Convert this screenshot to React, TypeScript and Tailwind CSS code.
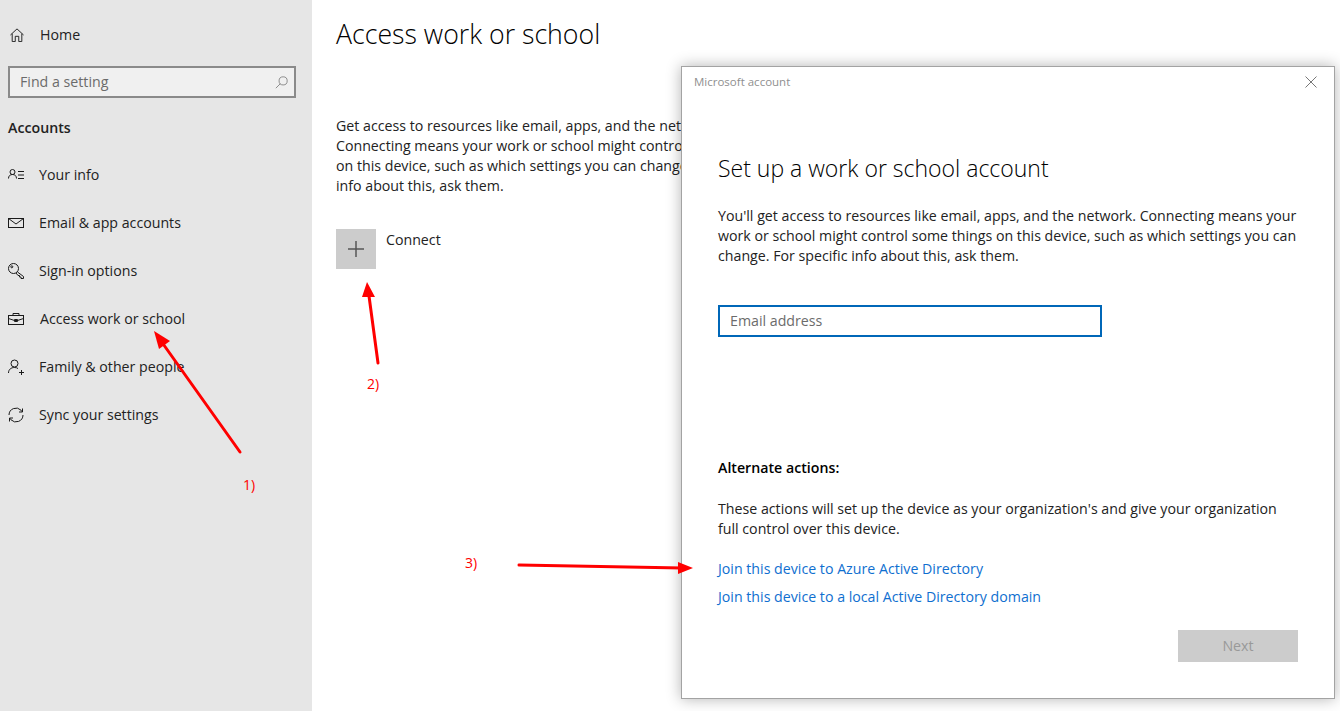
const font = "font-['Open_Sans','Noto_Sans',sans-serif]";

function Icon({ children }: { children: React.ReactNode }) {
  return (
    <svg className="w-4 h-4 shrink-0 text-[#1a1a1a]" viewBox="0 0 16 16" fill="none" stroke="currentColor" strokeWidth={1}>
      {children}
    </svg>
  );
}

const navItems = [
  {
    label: "Your info",
    textClass: "",
    icon: (
      <Icon>
        <circle cx="4.500" cy="5" r="2.500" />
        <path d="M0.500 11.500c0-2.500 1.500-4 4-4s4 1.500 4 4M10 4.500h6M10 8h6M10 11.500h6" />
      </Icon>
    ),
  },
  {
    label: "Email & app accounts",
    textClass: "",
    icon: (
      <Icon>
        <rect x="0.500" y="3.500" width="15" height="9" />
        <path d="M0.500 3.500 8 9l7.500-5.500" />
      </Icon>
    ),
  },
  {
    label: "Sign-in options",
    textClass: "",
    icon: (
      <Icon>
        <circle cx="5.500" cy="5.500" r="5" />
        <circle cx="3.800" cy="3.800" r="1" />
        <path d="M9.500 9l6 4.500v2h-2.500v-1.500h-1.500v-1.500H10L8 10" />
      </Icon>
    ),
  },
  {
    label: "Access work or school",
    textClass: "ml-px",
    icon: (
      <Icon>
        <rect x="0.500" y="4.500" width="15" height="9" />
        <path d="M5 4.500v-2h6v2M0.500 7.500l6 2h3l6-2M6.500 8.500h3v2h-3z" />
      </Icon>
    ),
  },
  {
    label: "Family & other people",
    textClass: "",
    icon: (
      <Icon>
        <circle cx="6.500" cy="4.500" r="3.500" />
        <path d="M0.500 14c0-3.500 2.500-5.500 6-5.500 1.500 0 2.500 0.300 3.500 1M11 13.500h5M13.500 11v5" />
      </Icon>
    ),
  },
  {
    label: "Sync your settings",
    textClass: "",
    icon: (
      <Icon>
        <path d="M1 8a7 7 0 0 1 12-4.800L14.500 5M15 8a7 7 0 0 1-12 4.800L1.500 11M14.500 1.500V5H11M1.500 14.500V11H5" />
      </Icon>
    ),
  },
];

function Sidebar() {
  return (
    <aside className="w-[312px] shrink-0 bg-[#e6e6e6] h-[711px] text-[14.2px] text-[#222222]">
      <div className="flex items-center h-[48px] mt-[11px] pl-[10px] gap-4">
        <svg className="w-[14px] h-[14px] shrink-0" viewBox="0 0 16 16" fill="none" stroke="currentColor" strokeWidth={1.100}>
          <path d="M0.500 8 8 1l7.500 7M2.500 6.500v9h3.500v-6h4v6h3.500v-9" />
        </svg>
        <span>Home</span>
      </div>
      <div className="ml-2 mt-[7px] w-[288px] h-[32px] border-2 border-[#8a8a8a] bg-[#f0f0f0] flex items-center justify-between pl-[10px] pr-[6px] text-[#6b6b6b]">
        <span>Find a setting</span>
        <svg className="w-[13px] h-[13px]" viewBox="0 0 16 16" fill="none" stroke="#777777" strokeWidth={1}>
          <circle cx="10" cy="6" r="5" />
          <path d="M6.500 9.500 1 15" />
        </svg>
      </div>
      <div className="px-2 mt-[20px] h-[20px] leading-[20px] font-semibold">Accounts</div>
      <nav className="mt-[13px]">
        {navItems.map((item) => (
          <div key={item.label} className="flex items-center h-[48px] pl-2 gap-[15px]">
            {item.icon}
            <span className={item.textClass}>{item.label}</span>
          </div>
        ))}
      </nav>
    </aside>
  );
}

function Content() {
  return (
    <main className="flex-1 pl-[24px] text-[14.2px] text-[#222222]">
      <h1 className="mt-[14px] h-[40px] leading-[40px] text-[26.700px] font-light text-black">Access work or school</h1>
      <p className="mt-[62px] w-[560px] leading-[20px]">
        Get access to resources like email, apps, and the network.
        <br />
        Connecting means your work or school might control some things
        <br />
        on this device, such as which settings you can change. For specific
        <br />
        info about this, ask them.
      </p>
      <div className="flex mt-[33px] gap-[10px]">
        <div className="w-[40px] h-[40px] bg-[#cccccc] flex items-center justify-center">
          <svg className="w-[16px] h-[16px]" viewBox="0 0 16 16" stroke="#555555" strokeWidth={1.500}>
            <path d="M8 0v16M0 8h16" />
          </svg>
        </div>
        <span className="leading-[20px] mt-px">Connect</span>
      </div>
    </main>
  );
}

function Dialog() {
  return (
    <div className="absolute left-[681px] top-[66px] w-[654px] h-[633px] bg-white border border-[#a3a3a3] shadow-[0_0_14px_rgba(0,0,0,0.3)] text-[14.2px] text-[#222222]">
      <div className="flex items-center justify-between h-[30px] pl-3 pr-[17px]">
        <span className="text-[11.500px] text-[#8f8f8f]">Microsoft account</span>
        <svg className="w-[12px] h-[12px]" viewBox="0 0 12 12" stroke="#777777" strokeWidth={1}>
          <path d="M0.500 0.500l11 11M11.500 0.500l-11 11" />
        </svg>
      </div>
      <div className="pl-[36px] pr-[36px]">
        <h2 className="mt-[51px] h-[40px] leading-[40px] text-[23px] font-light text-black">Set up a work or school account</h2>
        <p className="mt-[18px] leading-[20px] whitespace-nowrap">
          You'll get access to resources like email, apps, and the network. Connecting means your
          <br />
          work or school might control some things on this device, such as which settings you can
          <br />
          change. For specific info about this, ask them.
        </p>
        <div className="mt-[39px] w-[384px] h-[32px] border-2 border-[#0067b8] flex items-center pl-[10px] text-[#6b6b6b]">
          Email address
        </div>
        <div className="mt-[121px] h-[20px] leading-[20px] font-semibold text-black">Alternate actions:</div>
        <p className="mt-[21px] leading-[20px] whitespace-nowrap">
          These actions will set up the device as your organization's and give your organization
          <br />
          full control over this device.
        </p>
        <div className="mt-[20px] leading-[20px] text-[#0f6fd0]">Join this device to Azure Active Directory</div>
        <div className="mt-[8px] leading-[20px] text-[#0f6fd0]">Join this device to a local Active Directory domain</div>
        <div className="flex justify-end mt-[23px]">
          <button className="w-[120px] h-[32px] bg-[#cccccc] text-[#999999]">Next</button>
        </div>
      </div>
    </div>
  );
}

function Annotations() {
  return (
    <>
      <svg className="absolute left-0 top-0 w-[1340px] h-[711px] pointer-events-none" viewBox="0 0 1340 711">
        <g stroke="#ff0000" strokeWidth={3} fill="#ff0000" strokeLinecap="round">
          <path d="M240 452 161 341" />
          <path d="M378 363 369 296" />
          <path d="M519 565 682 568" />
        </g>
        <g fill="#ff0000">
          <polygon points="154,331 170,341 159,349" />
          <polygon points="367,282 375,297 362,297" />
          <polygon points="693,568 678,574 678,562" />
        </g>
      </svg>
      <span className="absolute left-[243px] top-[476px] text-[14px] leading-[18px] text-[#ff0000]">1)</span>
      <span className="absolute left-[367px] top-[375px] text-[14px] leading-[18px] text-[#ff0000]">2)</span>
      <span className="absolute left-[465px] top-[554px] text-[14px] leading-[18px] text-[#ff0000]">3)</span>
    </>
  );
}

export default function App() {
  return (
    <div className={`relative flex w-[1340px] h-[711px] overflow-hidden bg-white ${font}`}>
      <Sidebar />
      <Content />
      <Dialog />
      <Annotations />
    </div>
  );
}
